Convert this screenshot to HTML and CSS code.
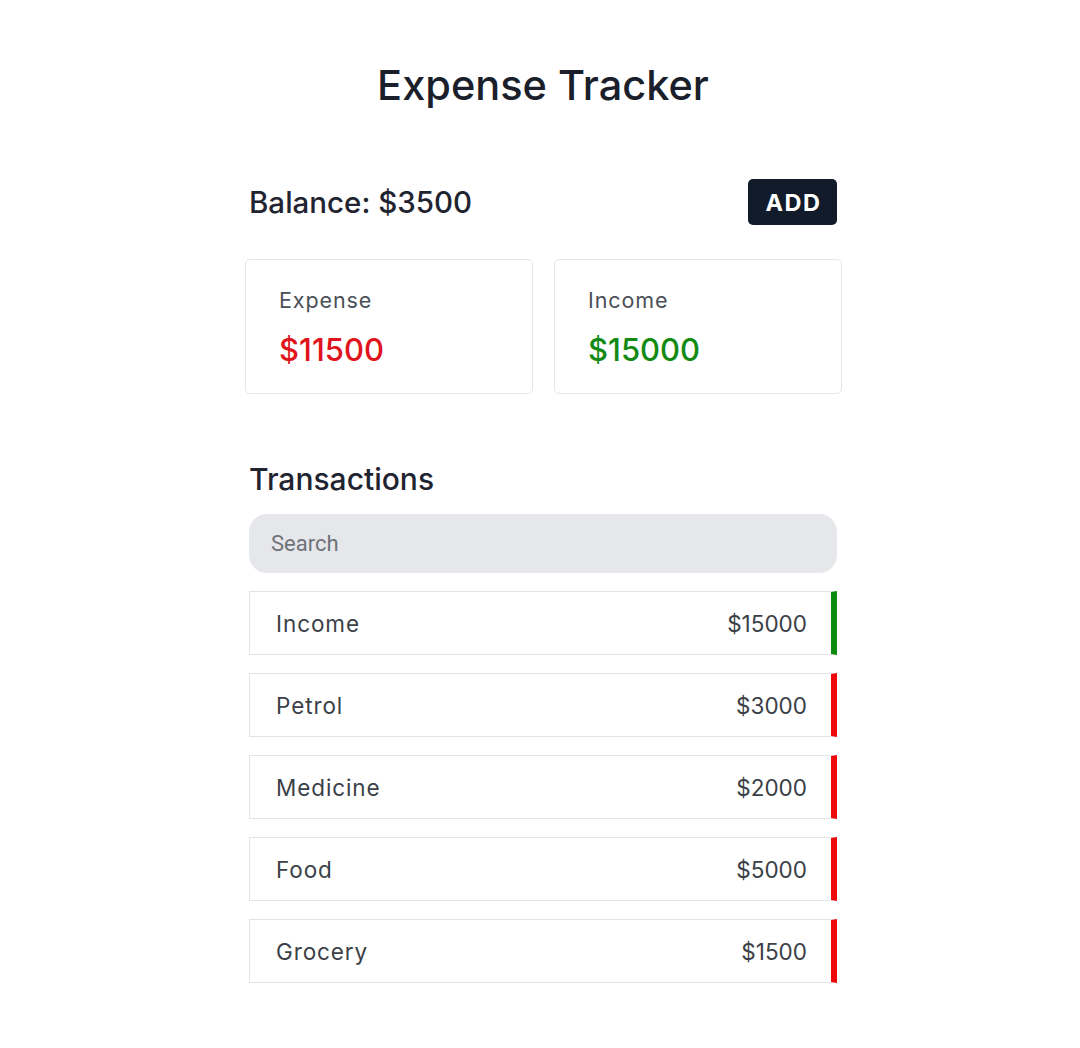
FILE: index.html
```html
<!DOCTYPE html>
<html>
<head>
<meta charset="utf-8"/>
<meta name="viewport" content="width=device-width, initial-scale=1.0" />
<title>Expense Tracker</title>
<link rel="stylesheet" href="styles.css">
</head>
<body>

<div class="app">
  <h1 class="title">Expense Tracker</h1>

  <div class="balance-row">
    <span class="balance">Balance: $3500</span>
    <button class="addbtn">ADD</button>
  </div>

  <div class="cards">
    <div class="card">
      <div class="card-label">Expense</div>
      <div class="card-amount expense">$11500</div>
    </div>
    <div class="card">
      <div class="card-label">Income</div>
      <div class="card-amount income">$15000</div>
    </div>
  </div>

  <h2 class="section-title">Transactions</h2>
  <input class="search" type="text" placeholder="Search">

  <ul class="txlist">
    <li class="tx plus"><span class="tx-name">Income</span><span>$15000</span></li>
    <li class="tx minus"><span class="tx-name">Petrol</span><span>$3000</span></li>
    <li class="tx minus"><span class="tx-name">Medicine</span><span>$2000</span></li>
    <li class="tx minus"><span class="tx-name">Food</span><span>$5000</span></li>
    <li class="tx minus"><span class="tx-name">Grocery</span><span>$1500</span></li>
  </ul>
</div>

</body>
</html>
```

FILE: styles.css
```css
body {
  font-family: "Inter", "Noto Sans", sans-serif;
  color: #111827;
  background: #fff;
  margin: 0;
  padding: 0 0 0 6px;
}

.app {
  width: 588px;
  margin: 0 auto;
  padding-top: 57px;
}

h1.title {
  margin: 0;
  text-align: center;
  font-size: 41.5px;
  font-weight: 500;
  line-height: 56px;
  color: #1a1f2b;
}

.balance-row {
  display: flex;
  justify-content: space-between;
  align-items: center;
  margin-top: 66px;
}

.balance {
  font-size: 29.5px;
  font-weight: 500;
  color: #1f2430;
}

.addbtn {
  background: #111b29;
  color: #fff;
  border: 0;
  border-radius: 5px;
  width: 89px;
  height: 46px;
  font-family: inherit;
  font-size: 23.5px;
  font-weight: 700;
  letter-spacing: 1.5px;
  padding: 0 0 0 2px;
}

.cards {
  display: grid;
  grid-template-columns: 1fr 1fr;
  gap: 21px;
  margin: 34px -5px 0 -4px;
}

.card {
  border: 1px solid #e6e6e6;
  border-radius: 5px;
  padding: 25px 33px 0;
  box-sizing: border-box;
  height: 135px;
}

.card-label {
  font-size: 21.5px;
  letter-spacing: 0.9px;
  color: #4b4f57;
  line-height: 30px;
}

.card-amount {
  font-size: 31px;
  font-weight: 500;
  line-height: 44px;
  margin-top: 13px;
}

.card-amount.expense { color: #e0141c; }
.card-amount.income { color: #138a13; }

h2.section-title {
  margin: 63px 0 0;
  font-size: 30px;
  font-weight: 500;
  line-height: 44px;
  color: #1f2430;
}

.search {
  display: block;
  width: 100%;
  height: 59px;
  box-sizing: border-box;
  margin-top: 13px;
  border: 0;
  border-radius: 18px;
  background: #e5e7eb;
  padding: 0 22px;
  font-family: Roboto, "Liberation Sans", sans-serif;
  font-size: 22px;
  color: #333;
  outline: none;
}

.search::placeholder { color: #6f7278; }

.txlist {
  list-style: none;
  margin: 18px 0 0;
  padding: 0;
  display: flex;
  flex-direction: column;
  gap: 18px;
}

.tx {
  display: flex;
  justify-content: space-between;
  align-items: center;
  height: 64px;
  box-sizing: border-box;
  border: 1px solid #e4e4e4;
  border-right: 6px solid #e00;
  padding: 0 24px 0 26px;
  font-size: 22.5px;
  color: #3b3f47;
}

.tx-name { letter-spacing: 0.9px; }

.tx.plus { border-right-color: #0a8a0a; }
.tx.minus { border-right-color: #ee0a0a; }
```
